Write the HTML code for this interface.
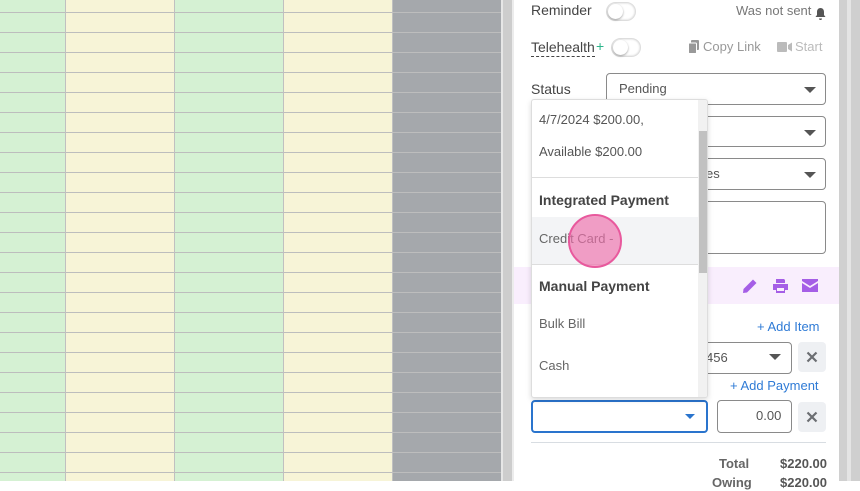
<!DOCTYPE html><html><head><style>
*{margin:0;padding:0;box-sizing:border-box}
body{width:860px;height:481px;overflow:hidden;position:relative;font-family:"Liberation Sans",sans-serif;background:#fff}
.a{position:absolute}
.t{position:absolute;font-size:13px;color:#555;white-space:nowrap;line-height:16px}
.sel{position:absolute;border:1px solid #8a8a8a;border-radius:4px;background:#fff}
.arr{position:absolute;width:0;height:0;border-left:6px solid transparent;border-right:6px solid transparent;border-top:6px solid #555}
.tg{position:absolute;width:30px;height:19px;border-radius:10px;background:#fff;border:1px solid #ddd;box-shadow:inset 0 0 2px #ccc}
.tg::after{content:"";position:absolute;left:1px;top:1px;width:15px;height:15px;border-radius:50%;background:#fff;box-shadow:0 1px 2px rgba(0,0,0,.35)}
.xb{position:absolute;width:28px;height:30px;background:#eef0f3;border-radius:4px}
</style></head><body>
<div class="a" style="left:0;top:0;width:66px;height:481px;background:#d5f1d3"></div>
<div class="a" style="left:66px;top:0;width:109px;height:481px;background:#f7f4d7"></div>
<div class="a" style="left:175px;top:0;width:109px;height:481px;background:#d5f1d3"></div>
<div class="a" style="left:284px;top:0;width:109px;height:481px;background:#f7f4d7"></div>
<div class="a" style="left:393px;top:0;width:108px;height:481px;background:#a5a8ac"></div>
<div class="a" style="left:0;top:0;width:501px;height:481px;background:repeating-linear-gradient(to bottom,transparent 0,transparent 12px,#bdbdbd 12px,#bdbdbd 13px,transparent 13px,transparent 20px)"></div>
<div class="a" style="left:65px;top:0;width:1px;height:481px;background:#c0c0c0"></div>
<div class="a" style="left:174px;top:0;width:1px;height:481px;background:#c0c0c0"></div>
<div class="a" style="left:283px;top:0;width:1px;height:481px;background:#c0c0c0"></div>
<div class="a" style="left:392px;top:0;width:1px;height:481px;background:#c0c0c0"></div>
<div class="a" style="left:501px;top:0;width:2px;height:481px;background:#e6e6e6"></div>
<div class="a" style="left:503px;top:0;width:9px;height:481px;background:#cdcdcd"></div>
<div class="a" style="left:512px;top:0;width:2px;height:481px;background:#ececec"></div>
<div class="a" style="left:839px;top:0;width:8px;height:481px;background:#d0d0d0"></div>
<div class="a" style="left:847px;top:0;width:4px;height:481px;background:#e4e4e4"></div>
<div class="a" style="left:851px;top:0;width:9px;height:481px;background:#cfcfcf"></div>

<div class="t" style="left:531px;top:2px;font-size:14px;color:#444">Reminder</div>
<div class="tg" style="left:606px;top:2px"></div>
<div class="t" style="left:736px;top:3px;color:#777">Was not sent</div>
<svg class="a" style="left:814px;top:7px" width="13" height="14" viewBox="0 0 13 14"><path d="M6.5 1C4 1 3 3 3 5v3L1.5 10h10L10 8V5C10 3 9 1 6.5 1z M5 11.5h3a1.5 1.5 0 0 1-3 0z" fill="#555"/></svg>

<div class="t" style="left:531px;top:39px;font-size:14px;color:#444;border-bottom:1px dashed #444;padding-bottom:1px">Telehealth</div>
<div class="t" style="left:596px;top:38px;font-size:14px;color:#2bb58a">+</div>
<div class="tg" style="left:611px;top:38px"></div>
<svg class="a" style="left:688px;top:40px" width="12" height="14" viewBox="0 0 12 14"><rect x="3" y="0" width="8" height="10" rx="1" fill="#999"/><rect x="0.5" y="3" width="8" height="10.5" rx="1" fill="#999" stroke="#fff"/></svg>
<div class="t" style="left:703px;top:39px;color:#999">Copy Link</div>
<svg class="a" style="left:777px;top:42px" width="15" height="10" viewBox="0 0 15 10"><rect x="0" y="0" width="10" height="10" rx="1" fill="#bbb"/><path d="M11 3l4-2.5v9L11 7z" fill="#bbb"/></svg>
<div class="t" style="left:795px;top:39px;color:#bbb">Start</div>

<div class="t" style="left:531px;top:81px;font-size:14px;color:#444">Status</div>
<div class="sel" style="left:606px;top:73px;width:220px;height:32px"></div>
<div class="t" style="left:619px;top:81px;color:#555">Pending</div>
<div class="arr" style="left:804px;top:87px"></div>
<div class="sel" style="left:606px;top:116px;width:220px;height:31px"></div>
<div class="arr" style="left:804px;top:130px"></div>
<div class="sel" style="left:606px;top:158px;width:220px;height:32px"></div>
<div class="t" style="left:706px;top:166px">es</div>
<div class="arr" style="left:804px;top:172px"></div>
<div class="sel" style="left:606px;top:201px;width:220px;height:53px"></div>

<div class="a" style="left:514px;top:267px;width:325px;height:37px;background:#f9eefd"></div>
<svg class="a" style="left:742px;top:278px" width="16" height="16" viewBox="0 0 16 16"><path d="M11 1.5l3.5 3.5L5 14.5 1 15l.5-4z" fill="#a55ee6"/></svg>
<svg class="a" style="left:772px;top:278px" width="17" height="16" viewBox="0 0 17 16"><path d="M4 1h8l1 1v3H4z M1 6h15v6h-3v3H4v-3H1z" fill="#a55ee6"/><rect x="5" y="10" width="7" height="3" fill="#f9eefd"/></svg>
<svg class="a" style="left:802px;top:279px" width="16" height="13" viewBox="0 0 16 13"><path d="M0 0h16v2L8 7 0 2z M0 4l8 5 8-5v9H0z" fill="#a55ee6"/></svg>

<div class="t" style="left:757px;top:319px;color:#2f7bd6">+ Add Item</div>
<div class="sel" style="left:600px;top:342px;width:192px;height:32px"></div>
<div class="t" style="left:706px;top:350px">456</div>
<div class="arr" style="left:769px;top:354px"></div>
<div class="xb" style="left:798px;top:342px"><svg class="a" style="left:8px;top:9px" width="12" height="12" viewBox="0 0 12 12"><path d="M1.5 1.5l9 9M10.5 1.5l-9 9" stroke="#6b6e72" stroke-width="2.2"/></svg></div>
<div class="t" style="left:730px;top:378px;color:#2f7bd6">+ Add Payment</div>
<div class="a" style="left:531px;top:400px;width:177px;height:33px;border:2px solid #2a74cd;border-radius:4px"></div>
<div class="arr" style="left:685px;top:414px;border-top-color:#2a74cd;border-left-width:5px;border-right-width:5px;border-top-width:5px"></div>
<div class="sel" style="left:717px;top:400px;width:75px;height:33px"></div>
<div class="t" style="left:756px;top:408px">0.00</div>
<div class="xb" style="left:798px;top:402px"><svg class="a" style="left:8px;top:9px" width="12" height="12" viewBox="0 0 12 12"><path d="M1.5 1.5l9 9M10.5 1.5l-9 9" stroke="#6b6e72" stroke-width="2.2"/></svg></div>
<div class="a" style="left:531px;top:442px;width:295px;height:1px;background:#d8dde2"></div>
<div class="t" style="left:719px;top:456px;font-weight:bold;color:#666">Total</div>
<div class="t" style="left:780px;top:456px;font-weight:bold;color:#555">$220.00</div>
<div class="t" style="left:712px;top:475px;font-weight:bold;color:#666">Owing</div>
<div class="t" style="left:780px;top:475px;font-weight:bold;color:#555">$220.00</div>

<div class="a" style="left:531px;top:99px;width:177px;height:299px;background:#fff;border:1px solid #ddd;border-radius:3px;box-shadow:0 2px 6px rgba(0,0,0,.15);overflow:hidden">
<div class="a" style="left:166px;top:0;width:10px;height:299px;background:#f1f1f1"></div>
<div class="a" style="left:167px;top:31px;width:8px;height:142px;background:#c1c1c1"></div>
<div class="a" style="left:0;top:117px;width:166px;height:47px;background:#f3f4f6"></div>
<div class="a" style="left:0;top:77px;width:166px;height:1px;background:#ddd"></div>
<div class="a" style="left:0;top:164px;width:166px;height:1px;background:#ddd"></div>
<div class="t" style="left:7px;top:12px;color:#555">4/7/2024 $200.00,</div>
<div class="t" style="left:7px;top:44px;color:#555">Available $200.00</div>
<div class="t" style="left:7px;top:92px;font-size:14px;font-weight:bold;color:#444">Integrated Payment</div>
<div class="t" style="left:7px;top:131px;color:#666">Credit Card -</div>
<div class="t" style="left:7px;top:178px;font-size:14px;font-weight:bold;color:#444">Manual Payment</div>
<div class="t" style="left:7px;top:216px;color:#666">Bulk Bill</div>
<div class="t" style="left:7px;top:258px;color:#666">Cash</div>
</div>
<div class="a" style="left:568px;top:214px;width:54px;height:54px;border-radius:50%;background:rgba(238,110,170,.65);border:2px solid #e8599d"></div>
</body></html>
